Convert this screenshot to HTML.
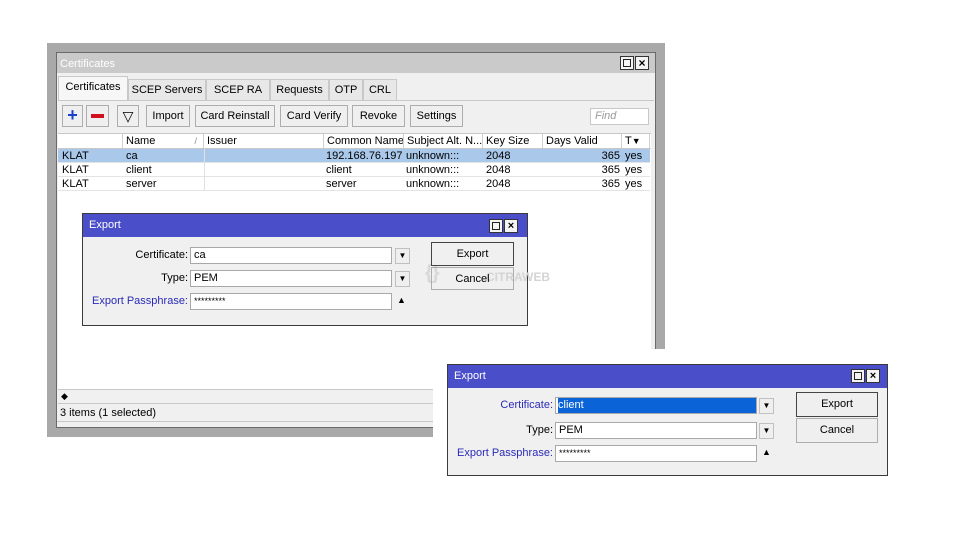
<!DOCTYPE html>
<html><head><style>
*{box-sizing:border-box;margin:0;padding:0}
body{width:960px;height:540px;background:#fff;position:relative;overflow:hidden;font-family:"Liberation Sans",Arial,sans-serif;font-size:11px;color:#000;white-space:nowrap}
.a{position:absolute}
.btn{position:absolute;background:#efefef;border:1px solid #adadad;text-align:center;line-height:20px;font-size:11px}
.tab{position:absolute;top:79px;height:21px;border:1px solid #c8c8c8;border-bottom:none;background:#e8e8e8;line-height:20px;text-align:center;font-size:11px}
.col{position:absolute;top:134px;height:14px;border-right:1px solid #d0d0d0;padding-left:3px;line-height:14px;overflow:hidden}
.row{position:absolute;left:58px;width:592px;height:14px;line-height:14px;border-bottom:1px solid #e4e4e4}
.row span{position:absolute;top:0}
.inp{position:absolute;background:#fff;border:1px solid #a8a8a8;padding-left:3px;line-height:15px}
.dd{position:absolute;width:15px;height:16px;background:#efefef;border:1px solid #c0c0c0;font-size:8px;text-align:center;line-height:14px}
.lbl{position:absolute;text-align:right;line-height:16px}
</style></head><body>
<div class="a" style="left:47px;top:43px;width:618px;height:394px;background:#a9a9a9"></div>
<div class="a" style="left:56px;top:52px;width:600px;height:376px;background:#f0f0f0;border:1px solid #6a6a6a"></div>
<div class="a" style="left:57px;top:53px;width:598px;height:20px;background:#cacaca;color:#fff;padding-left:3px;line-height:22px">Certificates</div>
<div class="a" style="left:620px;top:56px;width:14px;height:14px;border:1px solid #333;background:#f4f4f4"><div style="margin:2px;width:8px;height:8px;border:1px solid #222"></div></div>
<div class="a" style="left:635px;top:56px;width:14px;height:14px;border:1px solid #333;background:#f4f4f4;font-weight:bold;font-size:12px;line-height:12px;text-align:center">×</div>
<div class="tab" style="left:58px;top:76px;width:70px;height:25px;background:#f7f7f7">Certificates</div>
<div class="tab" style="left:128px;width:78px">SCEP Servers</div>
<div class="tab" style="left:206px;width:64px">SCEP RA</div>
<div class="tab" style="left:270px;width:59px">Requests</div>
<div class="tab" style="left:329px;width:34px">OTP</div>
<div class="tab" style="left:363px;width:34px">CRL</div>
<div class="a" style="left:58px;top:100px;width:596px;height:1px;background:#c8c8c8"></div>
<div class="btn" style="left:62px;top:105px;width:21px;height:22px;color:#1a3fc8;font-weight:bold;font-size:18px;line-height:18px">+</div>
<div class="btn" style="left:86px;top:105px;width:23px;height:22px"><div style="margin:8px auto;width:13px;height:4px;background:#d0101c"></div></div>
<div class="btn" style="left:117px;top:105px;width:22px;height:22px;font-size:14px">▽</div>
<div class="btn" style="left:146px;top:105px;width:44px;height:22px">Import</div>
<div class="btn" style="left:195px;top:105px;width:80px;height:22px">Card Reinstall</div>
<div class="btn" style="left:280px;top:105px;width:68px;height:22px">Card Verify</div>
<div class="btn" style="left:352px;top:105px;width:53px;height:22px">Revoke</div>
<div class="btn" style="left:410px;top:105px;width:53px;height:22px">Settings</div>
<div class="a" style="left:590px;top:108px;width:59px;height:17px;background:#fff;border:1px solid #c8c8c8;color:#999;font-style:italic;padding-left:4px;line-height:15px">Find</div>
<div class="a" style="left:58px;top:133px;width:593px;height:256px;background:#fff;border-top:1px solid #c8c8c8"></div>
<div class="col" style="left:58px;width:65px"></div>
<div class="col" style="left:123px;width:81px">Name<span style="position:absolute;right:6px;color:#888;font-size:9px">/</span></div>
<div class="col" style="left:204px;width:120px">Issuer</div>
<div class="col" style="left:324px;width:80px">Common Name</div>
<div class="col" style="left:404px;width:79px">Subject Alt. N...</div>
<div class="col" style="left:483px;width:60px">Key Size</div>
<div class="col" style="left:543px;width:79px">Days Valid</div>
<div class="col" style="left:622px;width:28px">T<span style="font-size:9px">▼</span></div>
<div class="a" style="left:58px;top:148px;width:593px;height:1px;background:#c8c8c8"></div>
<div class="row" style="top:149px;background:#a9c8ea"><span style="left:4px">KLAT</span><span style="left:68px">ca</span><span style="left:268px">192.168.76.197</span><span style="left:348px">unknown:::</span><span style="left:428px">2048</span><span style="left:540px;width:22px;text-align:right">365</span><span style="left:567px">yes</span></div>
<div class="row" style="top:163px"><span style="left:4px">KLAT</span><span style="left:68px">client</span><span style="left:268px">client</span><span style="left:348px">unknown:::</span><span style="left:428px">2048</span><span style="left:540px;width:22px;text-align:right">365</span><span style="left:567px">yes</span></div>
<div class="row" style="top:177px"><span style="left:4px">KLAT</span><span style="left:68px">server</span><span style="left:268px">server</span><span style="left:348px">unknown:::</span><span style="left:428px">2048</span><span style="left:540px;width:22px;text-align:right">365</span><span style="left:567px">yes</span></div>
<div class="a" style="left:204px;top:149px;width:1px;height:42px;background:#e0e0e0"></div>
<div class="a" style="left:58px;top:389px;width:593px;height:15px;background:#f0f0f0;border-top:1px solid #c8c8c8;border-bottom:1px solid #c8c8c8;font-size:9px;line-height:13px;padding-left:3px">◆</div>
<div class="a" style="left:60px;top:405px;line-height:16px">3 items (1 selected)</div>
<div class="a" style="left:57px;top:421px;width:598px;height:1px;background:#c8c8c8"></div>
<div class="a" style="left:82px;top:213px;width:446px;height:113px;background:#f0f0f0;border:1px solid #3a3a3a"></div>
<div class="a" style="left:83px;top:214px;width:444px;height:23px;background:#4a4ec8;color:#fff;padding-left:6px;line-height:23px">Export</div>
<div class="a" style="left:489px;top:219px;width:14px;height:14px;border:1px solid #333;background:#f4f4f4"><div style="margin:2px;width:8px;height:8px;border:1px solid #222"></div></div>
<div class="a" style="left:504px;top:219px;width:14px;height:14px;border:1px solid #333;background:#f4f4f4;font-weight:bold;line-height:12px;text-align:center">×</div>
<div class="lbl" style="left:84px;width:104px;top:247px">Certificate:</div>
<div class="lbl" style="left:84px;width:104px;top:270px">Type:</div>
<div class="lbl" style="left:84px;width:104px;top:293px;color:#2a2ab8">Export Passphrase:</div>
<div class="inp" style="left:190px;top:247px;width:202px;height:17px">ca</div>
<div class="inp" style="left:190px;top:270px;width:202px;height:17px">PEM</div>
<div class="inp" style="left:190px;top:293px;width:202px;height:17px;font-size:9px">*********</div>
<div class="dd" style="left:395px;top:248px">▼</div>
<div class="dd" style="left:395px;top:271px">▼</div>
<div class="a" style="left:397px;top:295px;font-size:9px">▲</div>
<div class="a" style="left:425px;top:262px;color:#d8d8d8;font-weight:bold;font-size:20px;letter-spacing:-1px">{}</div>
<div class="a" style="left:486px;top:270px;color:#d4d4d4;font-weight:bold;font-size:12px">CITRAWEB</div>
<div class="btn" style="left:431px;top:242px;width:83px;height:24px;border-color:#444;line-height:22px;background:#f0f0f0">Export</div>
<div class="btn" style="left:431px;top:267px;width:83px;height:23px;line-height:22px;background:transparent">Cancel</div>
<div class="a" style="left:433px;top:349px;width:240px;height:100px;background:#fff"></div>
<div class="a" style="left:447px;top:364px;width:441px;height:112px;background:#f0f0f0;border:1px solid #3a3a3a"></div>
<div class="a" style="left:448px;top:365px;width:439px;height:23px;background:#4a4ec8;color:#fff;padding-left:6px;line-height:23px">Export</div>
<div class="a" style="left:851px;top:369px;width:14px;height:14px;border:1px solid #333;background:#f4f4f4"><div style="margin:2px;width:8px;height:8px;border:1px solid #222"></div></div>
<div class="a" style="left:866px;top:369px;width:14px;height:14px;border:1px solid #333;background:#f4f4f4;font-weight:bold;line-height:12px;text-align:center">×</div>
<div class="lbl" style="left:448px;width:105px;top:397px;color:#2a2ab8">Certificate:</div>
<div class="lbl" style="left:448px;width:105px;top:422px">Type:</div>
<div class="lbl" style="left:448px;width:105px;top:445px;color:#2a2ab8">Export Passphrase:</div>
<div class="inp" style="left:555px;top:397px;width:202px;height:17px"><span style="background:#0a64d8;color:#fff;display:block;margin-left:-1px">client</span></div>
<div class="inp" style="left:555px;top:422px;width:202px;height:17px">PEM</div>
<div class="inp" style="left:555px;top:445px;width:202px;height:17px;font-size:9px">*********</div>
<div class="dd" style="left:759px;top:398px">▼</div>
<div class="dd" style="left:759px;top:423px">▼</div>
<div class="a" style="left:762px;top:447px;font-size:9px">▲</div>
<div class="btn" style="left:796px;top:392px;width:82px;height:25px;border-color:#444;line-height:23px">Export</div>
<div class="btn" style="left:796px;top:418px;width:82px;height:25px;line-height:23px">Cancel</div>
</body></html>
